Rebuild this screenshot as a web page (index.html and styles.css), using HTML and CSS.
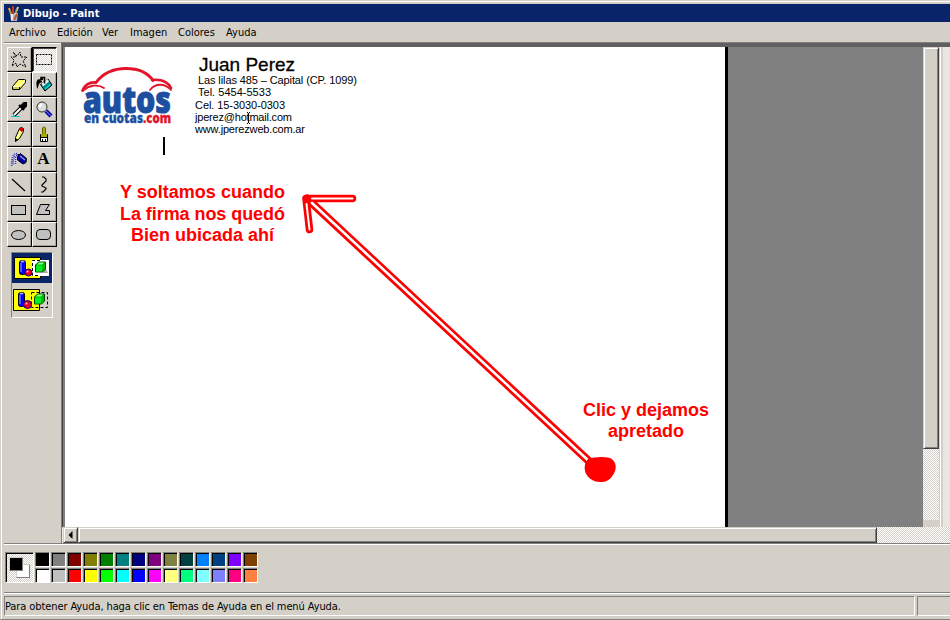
FILE: index.html
```html
<!DOCTYPE html>
<html lang="es">
<head>
    <meta charset="UTF-8">
    <title>Dibujo - Paint</title>
    <link rel="stylesheet" href="styles.css">
</head>
<body>
    <div class="window">
        <div class="title-bar">
            <svg class="app-icon" width="14" height="17" viewBox="0 0 14 17">
                <path d="M3 8h8l-1 8H4z" fill="#a9b9cf"/>
                <path d="M5 9v6" stroke="#e8eef8" stroke-width="2"/>
                <path d="M4 9L2 3" stroke="#e0a050" stroke-width="2"/>
                <path d="M6 9L6 1" stroke="#d03020" stroke-width="2"/>
                <path d="M8 10L11 2" stroke="#f0d080" stroke-width="2"/>
                <path d="M9 8V4M3 6l2 3" stroke="#40a040" stroke-width="1"/>
                <path d="M7 15l3-6" stroke="#c05020" stroke-width="2"/>
            </svg>
            <span class="title-text">Dibujo - Paint</span>
        </div>
        <div class="menu-bar">
            <span class="menu-archivo">Archivo</span>
            <span class="menu-edicion">Edición</span>
            <span class="menu-ver">Ver</span>
            <span class="menu-imagen">Imagen</span>
            <span class="menu-colores">Colores</span>
            <span class="menu-ayuda">Ayuda</span>
        </div>

        <div class="main">
            <div class="toolbox">
                <div class="tools">
                    <div class="tool"><svg viewBox="0 0 24 24"><path d="M6.500 4.500L10 8l3-4 1 5 6 0-4 4 3 6-6-3-3 3-1-4-4 3 2-6-3-3h5z" fill="none" stroke="#000" stroke-dasharray="2 1"/></svg></div>
                    <div class="tool selected"><svg viewBox="0 0 24 24"><rect x="4.500" y="6.500" width="15" height="10" fill="none" stroke="#000" stroke-dasharray="2 1"/></svg></div>
                    <div class="tool"><svg viewBox="0 0 24 24"><path d="M5.500 13.500l6-7h7v3l-6 7h-7z" fill="#ff6" stroke="#000"/><path d="M6 13.500h6l6-7" fill="none" stroke="#fff"/><path d="M6 14h6v2H6z" fill="#cc3"/><path d="M12.500 14v2.500" stroke="#000"/></svg></div>
                    <div class="tool"><svg viewBox="0 0 24 24"><path d="M6 6.500C4 8 4 12 5.500 16L7 11l3-3z" fill="#000"/><path d="M8.500 11.500L16 6l4 6-7 6z" fill="#088" stroke="#000"/><path d="M9.500 10.500l6-4.500 1.500 2.500-6 5z" fill="#eee"/><path d="M9 9.500V4.500h3.500v6M6 7.500l5-1.500" fill="none" stroke="#000" stroke-width="1.500"/><path d="M13 16l5.500-4.500" stroke="#0dd" stroke-width="1.500"/></svg></div>
                    <div class="tool"><svg viewBox="0 0 24 24"><path d="M4 18h9v1H4zM6 16h3v3H6z" fill="#0cc"/><path d="M7 17l8-8" stroke="#000" stroke-width="4"/><path d="M7 17l7-7" stroke="#fff" stroke-width="2"/><path d="M12 7l5 5M14 8l3-3h2v3l-3 3z" fill="#000" stroke="#000" stroke-width="2"/></svg></div>
                    <div class="tool"><svg viewBox="0 0 24 24"><circle cx="10" cy="9" r="5" fill="#ddd" stroke="#333"/><path d="M7 9l3-3" stroke="#fff" stroke-width="2"/><path d="M14 13l5 5" stroke="#008" stroke-width="4"/><path d="M14 13l5 5" stroke="#55f" stroke-width="1.500"/></svg></div>
                    <div class="tool"><svg viewBox="0 0 24 24"><path d="M8.500 18.500v-4l4-9 1.500-1 2.500 1v3l-4 7z" fill="#ff6" stroke="#000"/><path d="M13 5h3v3l-1 1-3-2z" fill="#d00"/><path d="M8 19v-4l3 1.500z" fill="#000"/><path d="M10.500 14l3-6" stroke="#fff"/></svg></div>
                    <div class="tool"><svg viewBox="0 0 24 24"><path d="M10.500 11V5l1-1h1l1 1v6" fill="#aa0" stroke="#660"/><path d="M8.500 11.500h7v7h-7z" fill="#fff" stroke="#000"/><path d="M9 11h6v3H9z" fill="#aa0"/><path d="M8 14.500h8M10.500 16v3M13.500 16v3" stroke="#000"/></svg></div>
                    <div class="tool"><svg viewBox="0 0 24 24"><path d="M10.500 8.500l3-3 6 5-.500 4-3 1.500-5.500-4z" fill="#009" stroke="#000"/><path d="M13 8l5 4" stroke="#99f" stroke-width="1.500"/><path d="M10 6h3v2h-2z" fill="#000"/><path d="M10 5.500C6 5.500 4.500 10 4.500 18M10 7.500c-3 0-4 3-4 9M8.500 9v7" fill="none" stroke="#33c" stroke-width="1.500" stroke-dasharray="1 1"/></svg></div>
                    <div class="tool letter">A</div>
                    <div class="tool"><svg viewBox="0 0 24 24"><path d="M5 6l13 12" stroke="#000" stroke-width="1.200"/></svg></div>
                    <div class="tool"><svg viewBox="0 0 24 24"><path d="M10 4h2l2 2v2l-4 4v1l4 2v1l-3 3H9" fill="none" stroke="#000" stroke-width="1.200"/></svg></div>
                    <div class="tool"><svg viewBox="0 0 24 24"><rect x="4.500" y="7.500" width="14" height="9" fill="#c0c0c0" stroke="#000"/></svg></div>
                    <div class="tool"><svg viewBox="0 0 24 24"><path d="M8.500 6.500h9l-4 6h4v4h-13z" fill="#c0c0c0" stroke="#000"/></svg></div>
                    <div class="tool"><svg viewBox="0 0 24 24"><ellipse cx="11.500" cy="12" rx="7" ry="4.500" fill="#c0c0c0" stroke="#000"/></svg></div>
                    <div class="tool"><svg viewBox="0 0 24 24"><rect x="4.500" y="6.500" width="14" height="10" rx="3.500" fill="#c0c0c0" stroke="#000"/></svg></div>
                </div>
                <div class="tool-options">
                    <div class="option active">
                        <svg width="36" height="24" viewBox="0 0 36 24">
                            <path d="M.500 1.500h26v21H.500z" fill="#ff0" stroke="#000"/>
                            <path d="M18 4h17v16H18z" fill="#fff"/>
                            <path d="M26 4.500h-7.500v15H26" fill="none" stroke="#000" stroke-dasharray="3 2"/>
                            <rect x="5.500" y="4.500" width="6" height="14" rx="2" fill="#00f" stroke="#000"/><path d="M7 7v9" stroke="#aaf"/><ellipse cx="8.500" cy="5.500" rx="2" ry="1" fill="#aaf"/>
                            <circle cx="14.500" cy="16.500" r="3.500" fill="#e02" stroke="#008"/><circle cx="13.500" cy="15.500" r="1" fill="#fcc"/>
                            <path d="M28 17h6l-3-6z" fill="#aaa"/>
                            <path d="M21.500 9l3-3h7v7l-3 3h-7z" fill="#0b0" stroke="#040"/><path d="M22 9.500h6v6h-6z" fill="#0e2"/><path d="M23 8.500l2-2h5l-2 2z" fill="#8f8"/>
                        </svg>
                    </div>
                    <div class="option">
                        <svg width="36" height="24" viewBox="0 0 36 24">
                            <path d="M.500 1.500h26v21H.500z" fill="#ff0" stroke="#000"/>
                            <path d="M18.500 4.500h16v15h-16z" fill="none" stroke="#000" stroke-dasharray="3 2"/>
                            <rect x="5.500" y="4.500" width="6" height="14" rx="2" fill="#00f" stroke="#000"/><path d="M7 7v9" stroke="#aaf"/><ellipse cx="8.500" cy="5.500" rx="2" ry="1" fill="#aaf"/>
                            <circle cx="14.500" cy="16.500" r="4" fill="#e02" stroke="#008"/><circle cx="13.500" cy="15.500" r="1" fill="#fcc"/>
                            <path d="M21.500 9l3-3h7v7l-3 3h-7z" fill="#0b0" stroke="#040"/><path d="M22 9.500h6v6h-6z" fill="#0e2"/><path d="M23 8.500l2-2h5l-2 2z" fill="#8f8"/>
                        </svg>
                    </div>
                </div>
            </div>

            <div class="workspace">
                <div class="view">
                    <!-- The drawing itself -->
                    <svg class="drawing" width="660" height="480" viewBox="65 47 660 480">
                        <g fill="none" stroke="#e3142a" stroke-linecap="round">
                            <path d="M82.500 90.500C85 85 90 82 96 82.500C104 72 114 68.500 126 68.500C138 68.500 148 73 153 80.500" stroke-width="2.800"/>
                            <path d="M152 80C161 79 168 82 171 88" stroke-width="2.600"/>
                            <path d="M83 90.500C90 85 98 84 104 88M150 90C155 83 165 83 171 90" stroke-width="1.800"/>
                        </g>
                        <text class="logo-name" x="83" y="112.500" textLength="88" lengthAdjust="spacingAndGlyphs">autos</text>
                        <text class="logo-sub" x="84" y="122.500" textLength="59" lengthAdjust="spacingAndGlyphs">en cuotas</text>
                        <text class="logo-sub logo-com" x="143" y="122.500" textLength="28" lengthAdjust="spacingAndGlyphs">.com</text>

                        <g class="signature">
                            <text class="person" x="199" y="71" textLength="96">Juan Perez</text>
                            <text x="198" y="84" textLength="159">Las lilas 485 – Capital (CP. 1099)</text>
                            <text x="198" y="96" textLength="73">Tel. 5454-5533</text>
                            <text x="195" y="109" textLength="90">Cel. 15-3030-0303</text>
                            <text x="195" y="121" textLength="97">jperez@hotmail.com</text>
                            <text x="195" y="133" textLength="110">www.jperezweb.com.ar</text>
                        </g>
                        <path d="M248.500 113v10M247 112.500h1M249 112.500h1M247 123.500h1M249 123.500h1" stroke="#000"/>
                        <path d="M164 137v18" stroke="#000" stroke-width="2"/>

                        <g class="note">
                            <text x="120" y="198" textLength="165">Y soltamos cuando</text>
                            <text x="120" y="219.500" textLength="165">La firma nos quedó</text>
                            <text x="131" y="241" textLength="143">Bien ubicada ahí</text>
                            <text x="583" y="415.500" textLength="126">Clic y dejamos</text>
                            <text x="608" y="437" textLength="76">apretado</text>
                        </g>

                        <g fill="none" stroke-linecap="round">
                            <path d="M307 198.500L592 464" stroke="#f00" stroke-width="8"/>
                            <path d="M306 198.500H352.500M306 198.500L309.500 229.500" stroke="#f00" stroke-width="7.500"/>
                            <path d="M312 203L592 464" stroke="#fff" stroke-width="2.600"/>
                            <path d="M312 198.500H352.500M306.500 204L309.500 229.500" stroke="#fff" stroke-width="2"/>
                        </g>
                        <path d="M588 459c6-2 15-3 22-1c5 2 7 8 5 13c-2 5-6 11-13 11c-8 1-16-5-17-11c-1-5 0-9 3-12z" fill="#f00"/>
                    </svg>
                    <div class="v-scroll">
                        <div class="v-thumb"></div>
                        <div class="v-end"></div>
                    </div>
                    <div class="frame-edge"></div>
                </div>
                <div class="h-scroll">
                    <div class="scroll-left"><svg width="5" height="8" viewBox="0 0 5 8"><path d="M4.500 0v8L.500 4z"/></svg></div>
                    <div class="h-thumb"></div>
                </div>
            </div>
        </div>

        <div class="color-box">
            <div class="current-colors">
                <span class="background-color"></span>
                <span class="foreground-color"></span>
            </div>
            <div class="palette" id="palette"></div>
        </div>

        <div class="status-bar">
            <div class="status-help"><span>Para obtener Ayuda, haga clic en Temas de Ayuda en el menú Ayuda.</span></div>
            <div class="status-position"></div>
        </div>
    </div>

    <script>
        const colors = [
            '#000000', '#808080', '#800000', '#808000', '#008000', '#008080', '#000080',
            '#800080', '#808040', '#004040', '#0080ff', '#004080', '#8000ff', '#804000',
            '#ffffff', '#c0c0c0', '#ff0000', '#ffff00', '#00ff00', '#00ffff', '#0000ff',
            '#ff00ff', '#ffff80', '#00ff80', '#80ffff', '#8080ff', '#ff0080', '#ff8040'
        ];
        const palette = document.getElementById('palette');

        colors.forEach(color => {
            const swatch = document.createElement('span');
            swatch.className = 'swatch';
            swatch.style.backgroundColor = color;
            palette.appendChild(swatch);
        });
    </script>
</body>
</html>
```
FILE: styles.css
```css
* {
    box-sizing: border-box;
}

body {
    margin: 0;
    overflow: hidden;
    background-color: #d4d0c8;
    font-family: 'DejaVu Sans Condensed', 'DejaVu Sans', sans-serif;
    font-size: 11px;
    color: #000;
}

.window {
    display: flex;
    flex-direction: column;
    width: 950px;
    height: 620px;
    padding: 3px 0 0 3px;
    border-top: 1px solid #d4d0c8;
    border-left: 1px solid #d4d0c8;
    border-bottom: 1px solid #808080;
    box-shadow: inset 1px 1px 0 #fff;
}

.title-bar {
    display: flex;
    align-items: center;
    height: 18px;
    padding-left: 3px;
    gap: 2px;
    background-color: #0a246a;
    color: #fff;
    font-weight: bold;
}

.title-text {
    letter-spacing: 0.05px;
}

.menu-bar {
    display: flex;
    align-items: center;
    height: 20px;
    padding-left: 5px;
}

.menu-bar span {
    white-space: nowrap;
}

.menu-archivo { width: 48px; }
.menu-edicion { width: 45px; }
.menu-ver { width: 28px; }
.menu-imagen { width: 48px; }
.menu-colores { width: 48px; }

.main {
    display: flex;
    height: 502px;
    border-top: 1px solid #808080;
    border-bottom: 1px solid #808080;
    box-shadow: 0 1px 0 #fff;
}

.toolbox {
    width: 57px;
    padding: 3px 0 0 3px;
    border-top: 1px solid #fff;
}

.tools {
    display: grid;
    grid-template-columns: 25px 25px;
    grid-auto-rows: 25px;
    width: 50px;
}

.tool {
    border-top: 1px solid #fff;
    border-left: 1px solid #fff;
    border-right: 1px solid #000;
    border-bottom: 1px solid #000;
    box-shadow: inset -1px -1px 0 #a8a49c;
}

.tool svg {
    display: block;
    width: 24px;
    height: 24px;
    margin-left: -1px;
}

.tool.selected {
    border-color: #000 #fff #fff #000;
    box-shadow: inset 1px 1px 0 #404040;
    background: repeating-conic-gradient(#fff 0 25%, #dedbd5 0 50%) 0 0 / 2px 2px;
}

.letter {
    padding-right: 2px;
    text-align: center;
    font: bold 17px/22px 'Liberation Serif', serif;
}

.tool-options {
    width: 42px;
    height: 66px;
    margin: 5px 0 0 4px;
    border: 1px solid #808080;
    border-right-color: #fff;
    border-bottom-color: #fff;
}

.option {
    height: 35px;
    padding: 5px 0 0 1px;
}

.option.active {
    height: 30px;
    padding: 3px 0 0 2px;
    background-color: #0a246a;
}

.option svg {
    display: block;
}

.workspace {
    flex: 1;
    border-top: 4px solid #606060;
    border-left: 1px solid #808080;
    box-shadow: inset 2px 0 0 #505050;
}

.view {
    display: flex;
    height: 480px;
    padding-left: 2px;
    background-color: #808080;
    border-left: 1px solid #404040;
}

.drawing {
    flex: none;
    background-color: #fff;
    border-right: 3px solid #000;
    box-sizing: content-box;
}

.v-scroll {
    display: flex;
    flex-direction: column;
    width: 16px;
    margin-left: 195px;
    background: repeating-conic-gradient(#fff 0 25%, #d4d0c8 0 50%) 0 0 / 2px 2px;
}

.v-thumb {
    height: 402px;
    background-color: #d4d0c8;
    border: 1px solid #d4d0c8;
    border-right-color: #404040;
    border-bottom-color: #404040;
    box-shadow: inset 1px 1px 0 #fff, inset -1px -1px 0 #808080;
}

.v-end {
    height: 7px;
    margin-top: auto;
    background-color: #d4d0c8;
}

.frame-edge {
    flex: 1;
    background-color: #e9e6e1;
    border-left: 1px solid #d4d0c8;
    box-shadow: inset 1px 0 0 #fff, inset 3px 0 0 #d4d0c8;
}

.h-scroll {
    display: flex;
    height: 16px;
    padding-left: 1px;
    background: repeating-conic-gradient(#fff 0 25%, #d4d0c8 0 50%) 0 0 / 2px 2px;
}

.scroll-left,
.h-thumb {
    background-color: #d4d0c8;
    border: 1px solid #d4d0c8;
    border-right-color: #404040;
    border-bottom-color: #404040;
    box-shadow: inset 1px 1px 0 #fff, inset -1px -1px 0 #808080;
}

.scroll-left {
    display: flex;
    align-items: center;
    justify-content: center;
    width: 15px;
}

.h-thumb {
    width: 799px;
}

.logo-name,
.logo-sub {
    font-family: 'Open Sans', sans-serif;
    font-weight: 800;
    fill: #1c4f9f;
    stroke: #1c4f9f;
}

.logo-name {
    font-size: 37px;
    stroke-width: 1px;
}

.logo-sub {
    font-size: 13.5px;
    stroke-width: 0.3px;
}

.logo-sub.logo-com {
    fill: #e3142a;
    stroke: #e3142a;
}

.signature {
    font: 11px 'Liberation Sans', Arial, sans-serif;
}

.person {
    font-size: 19px;
    stroke: #000;
    stroke-width: 0.3px;
}

.note {
    font: bold 18px 'Liberation Sans', Arial, sans-serif;
    fill: #f00;
}

.color-box {
    display: flex;
    height: 48px;
    padding: 8px 0 0 1px;
}

.current-colors {
    display: grid;
    width: 29px;
    height: 31px;
    border: 1px solid #808080;
    border-right-color: #fff;
    border-bottom-color: #fff;
    box-shadow: inset 1px 1px 0 #000;
    background: repeating-conic-gradient(#fff 0 25%, #d4d0c8 0 50%) 0 0 / 2px 2px;
}

.foreground-color,
.background-color {
    grid-area: 1 / 1;
    width: 14px;
    height: 14px;
    border: 1px solid #d4d0c8;
    border-right-color: #808080;
    border-bottom-color: #808080;
}

.foreground-color {
    margin: 4px 0 0 3px;
    background-color: #000;
}

.background-color {
    margin: 11px 0 0 10px;
    background-color: #fff;
}

.palette {
    display: grid;
    grid-template-columns: repeat(14, 16px);
    grid-auto-rows: 16px;
    margin-left: 1px;
}

.swatch {
    width: 15px;
    height: 15px;
    border: 1px solid #808080;
    border-right-color: #fff;
    border-bottom-color: #fff;
    box-shadow: inset 1px 1px 0 #000;
}

.status-bar {
    display: flex;
    height: 27px;
    padding: 3px 0 3px 0;
    gap: 2px;
    border-top: 1px solid #808080;
    box-shadow: inset 0 1px 0 #fff;
}

.status-help,
.status-position {
    border: 1px solid #808080;
    border-right-color: #fff;
    border-bottom-color: #fff;
}

.status-help {
    display: flex;
    align-items: center;
    width: 911px;
    padding-top: 1px;
    letter-spacing: -0.1px;
    white-space: nowrap;
}

.status-position {
    flex: 1;
    border-right: none;
}
```
